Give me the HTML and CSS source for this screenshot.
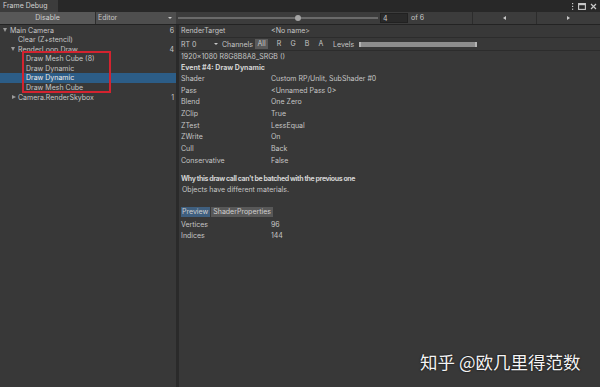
FILE: index.html
```html
<!DOCTYPE html>
<html lang="en">
<head>
    <meta charset="UTF-8">
    <title>Frame Debug</title>
    <link rel="stylesheet" href="styles.css">
</head>
<body>
<div class="window">
    <div class="tabbar">
        <div class="tab">Frame Debug</div>
        <div class="win-icons">
            <svg width="3" height="7" viewBox="0 0 3 7"><rect x="1" y="0" width="1.2" height="1.2" fill="#c8c8c8"/><rect x="1" y="2.8" width="1.2" height="1.2" fill="#c8c8c8"/><rect x="1" y="5.6" width="1.2" height="1.2" fill="#c8c8c8"/></svg>
            <svg width="8" height="7" viewBox="0 0 8 7"><rect x="0.6" y="0.6" width="6.8" height="5.8" fill="none" stroke="#c8c8c8" stroke-width="1.1"/><rect x="0.6" y="0.6" width="6.8" height="1.6" fill="#c8c8c8"/></svg>
            <svg width="7" height="7" viewBox="0 0 7 7"><path d="M1 1L6 6M6 1L1 6" stroke="#c8c8c8" stroke-width="1.2"/></svg>
        </div>
    </div>

    <div class="toolbar">
        <div class="btn-disable">Disable</div>
        <div class="dropdown-editor">Editor<span class="caret"></span></div>
        <div class="slider">
            <div class="track"></div>
            <div class="knob" style="left: 60%"></div>
        </div>
        <div class="num-field">4</div>
        <div class="of">of 6</div>
        <div class="nav-btn"><span class="tri-left"></span></div>
        <div class="nav-btn"><span class="tri-right"></span></div>
    </div>

    <div class="main">
        <div class="tree">
            <div class="row lvl0"><span class="arrow down"></span><span class="label">Main Camera</span><span class="count">6</span></div>
            <div class="row lvl1"><span class="arrow"></span><span class="label">Clear (Z+stencil)</span></div>
            <div class="row lvl1"><span class="arrow down"></span><span class="label">RenderLoop.Draw</span><span class="count">4</span></div>
            <div class="row lvl2"><span class="arrow"></span><span class="label">Draw Mesh Cube (8)</span></div>
            <div class="row lvl2"><span class="arrow"></span><span class="label">Draw Dynamic</span></div>
            <div class="row lvl2 selected"><span class="arrow"></span><span class="label">Draw Dynamic</span></div>
            <div class="row lvl2"><span class="arrow"></span><span class="label">Draw Mesh Cube</span></div>
            <div class="row lvl1"><span class="arrow right"></span><span class="label">Camera.RenderSkybox</span><span class="count">1</span></div>
            <div class="highlight-box"></div>
        </div>

        <div class="divider"></div>

        <div class="details">
            <div class="prop head-row"><span class="key">RenderTarget</span><span class="val">&lt;No name&gt;</span></div>
            <div class="rt-row">
                <span class="rt-drop">RT 0<span class="caret"></span></span>
                <span class="channels">Channels</span>
                <span class="ch active">All</span>
                <span class="ch">R</span>
                <span class="ch">G</span>
                <span class="ch">B</span>
                <span class="ch">A</span>
                <span class="levels">Levels</span>
                <span class="levels-bar"></span>
            </div>
            <div class="line">1920x1080 R8G8B8A8_SRGB ()</div>
            <div class="line bold">Event #4: Draw Dynamic</div>
            <div class="prop"><span class="key">Shader</span><span class="val">Custom RP/Unlit, SubShader #0</span></div>
            <div class="prop"><span class="key">Pass</span><span class="val">&lt;Unnamed Pass 0&gt;</span></div>
            <div class="prop"><span class="key">Blend</span><span class="val">One Zero</span></div>
            <div class="prop"><span class="key">ZClip</span><span class="val">True</span></div>
            <div class="prop"><span class="key">ZTest</span><span class="val">LessEqual</span></div>
            <div class="prop"><span class="key">ZWrite</span><span class="val">On</span></div>
            <div class="prop"><span class="key">Cull</span><span class="val">Back</span></div>
            <div class="prop"><span class="key">Conservative</span><span class="val">False</span></div>

            <div class="line bold why">Why this draw call can't be batched with the previous one</div>
            <div class="line reason">Objects have different materials.</div>

            <div class="tabs">
                <span class="tab-btn active">Preview</span>
                <span class="tab-btn">ShaderProperties</span>
            </div>
            <div class="prop"><span class="key">Vertices</span><span class="val">96</span></div>
            <div class="prop"><span class="key">Indices</span><span class="val">144</span></div>
        </div>
    </div>

    <div class="watermark">知乎 @欧几里得范数</div>
</div>
</body>
</html>
```

FILE: styles.css
```css
html, body {
    margin: 0;
    height: 100%;
}
body {
    background: #383838;
    color: #c6c6c6;
    font-family: Inter, "Noto Sans", sans-serif;
    font-size: 7px;
}
.window {
    position: relative;
    height: 387px;
    display: flex;
    flex-direction: column;
    overflow: hidden;
}

/* window tab strip */
.tabbar {
    height: 12px;
    background: #282828;
    display: flex;
    align-items: stretch;
}
.tab {
    width: 55px;
    background: #3c3c3c;
    padding-left: 3px;
    line-height: 12px;
    color: #d2d2d2;
}
.win-icons {
    margin-left: auto;
    display: flex;
    align-items: center;
    gap: 4px;
    padding-right: 3px;
}

/* toolbar */
.toolbar {
    height: 12px;
    background: #3c3c3c;
    border-bottom: 1px solid #232323;
    display: flex;
    align-items: stretch;
    line-height: 12px;
}
.btn-disable {
    width: 95px;
    background: #585858;
    text-align: center;
    color: #d0d0d0;
}
.dropdown-editor {
    width: 81px;
    background: #4e4e4e;
    padding-left: 2px;
    box-sizing: border-box;
    display: flex;
    align-items: center;
    border-left: 1px solid #2e2e2e;
}
.caret {
    display: inline-block;
    margin-left: auto;
    margin-right: 4px;
    border-left: 2px solid transparent;
    border-right: 2px solid transparent;
    border-top: 2.5px solid #c8c8c8;
}
.slider {
    position: relative;
    width: 200px;
    margin-left: 2px;
}
.track {
    position: absolute;
    left: 0;
    right: 0;
    top: 5px;
    height: 1.5px;
    background: #6a6a6a;
}
.knob {
    position: absolute;
    top: 3px;
    width: 6px;
    height: 6px;
    margin-left: -3px;
    border-radius: 50%;
    background: #a5a5a5;
}
.num-field {
    width: 28px;
    margin: 1px 0 1px 2px;
    background: #2a2a2a;
    border: 1px solid #212121;
    box-sizing: border-box;
    padding-left: 2px;
    line-height: 9px;
}
.of {
    margin-left: 3px;
    width: 61px;
}
.nav-btn {
    flex: 1;
    border-left: 1px solid #2c2c2c;
    display: flex;
    align-items: center;
    justify-content: center;
}
.tri-left, .tri-right {
    border-top: 2px solid transparent;
    border-bottom: 2px solid transparent;
}
.tri-left {
    border-right: 3px solid #c8c8c8;
}
.tri-right {
    border-left: 3px solid #c8c8c8;
}

/* main area */
.main {
    flex: 1;
    display: flex;
}
.tree {
    position: relative;
    width: 176px;
    padding-top: 0.5px;
}
.row {
    height: 9.6px;
    line-height: 9.6px;
    display: flex;
    align-items: center;
    padding-right: 2px;
}
.row.lvl0 { padding-left: 2px; }
.row.lvl1 { padding-left: 10px; }
.row.lvl2 { padding-left: 18px; }
.row.selected {
    background: #2c5d87;
    color: #ececec;
}
.arrow {
    width: 8px;
    height: 9.6px;
    display: flex;
    align-items: center;
}
.arrow.down::before {
    content: "";
    margin-left: 1px;
    border-left: 2.5px solid transparent;
    border-right: 2.5px solid transparent;
    border-top: 4px solid #9a9a9a;
}
.arrow.right::before {
    content: "";
    margin-left: 2px;
    border-top: 2.5px solid transparent;
    border-bottom: 2.5px solid transparent;
    border-left: 4px solid #9a9a9a;
}
.count {
    margin-left: auto;
}
.highlight-box {
    position: absolute;
    left: 22px;
    top: 26px;
    width: 89px;
    height: 42px;
    border: 2px solid #d3232f;
    box-sizing: border-box;
}
.divider {
    width: 3px;
    background: #2a2a2a;
}

/* details panel */
.details {
    flex: 1;
    padding-left: 2px;
}
.prop {
    height: 11.7px;
    line-height: 11.7px;
    display: flex;
}
.key {
    width: 90px;
}
.head-row {
    height: 12px;
    line-height: 12px;
    border-bottom: 1px solid #2c2c2c;
    margin-left: -2px;
    padding-left: 2px;
}
.rt-row {
    height: 12px;
    display: flex;
    align-items: center;
    border-bottom: 1px solid #2c2c2c;
    margin-left: -2px;
    padding-left: 2px;
}
.rt-drop {
    width: 38px;
    display: flex;
    align-items: center;
}
.rt-drop .caret {
    margin-right: 1px;
}
.channels {
    margin-left: 3px;
    width: 33px;
}
.ch {
    width: 14px;
    text-align: center;
    line-height: 10px;
}
.ch.active {
    background: #5a5a5a;
    width: 13px;
    margin-right: 4px;
}
.levels {
    margin-left: 5px;
    width: 26px;
}
.levels-bar {
    width: 118px;
    height: 5px;
    background: #8e8e8e;
    border-left: 2px solid #b4b4b4;
    border-right: 2px solid #b4b4b4;
    box-sizing: border-box;
}
.line {
    height: 11px;
    line-height: 11px;
}
.bold {
    font-weight: bold;
    color: #d2d2d2;
}
.why {
    margin-top: 6px;
    letter-spacing: -0.4px;
}
.reason {
    padding-left: 1px;
}
.tabs {
    margin-top: 12px;
    display: flex;
    height: 10px;
    line-height: 10px;
    margin-bottom: 2px;
}
.tab-btn {
    padding: 0 2px;
    background: #585858;
    color: #d0d0d0;
}
.tab-btn.active {
    background: #3f5f7f;
    margin-right: 1px;
    padding-left: 1px;
}

.watermark {
    position: absolute;
    left: 420px;
    top: 349px;
    font-family: "Noto Sans CJK SC", sans-serif;
    font-size: 17.5px;
    color: #f4f4f4;
    text-shadow: 0 0 2px #000;
}
```
